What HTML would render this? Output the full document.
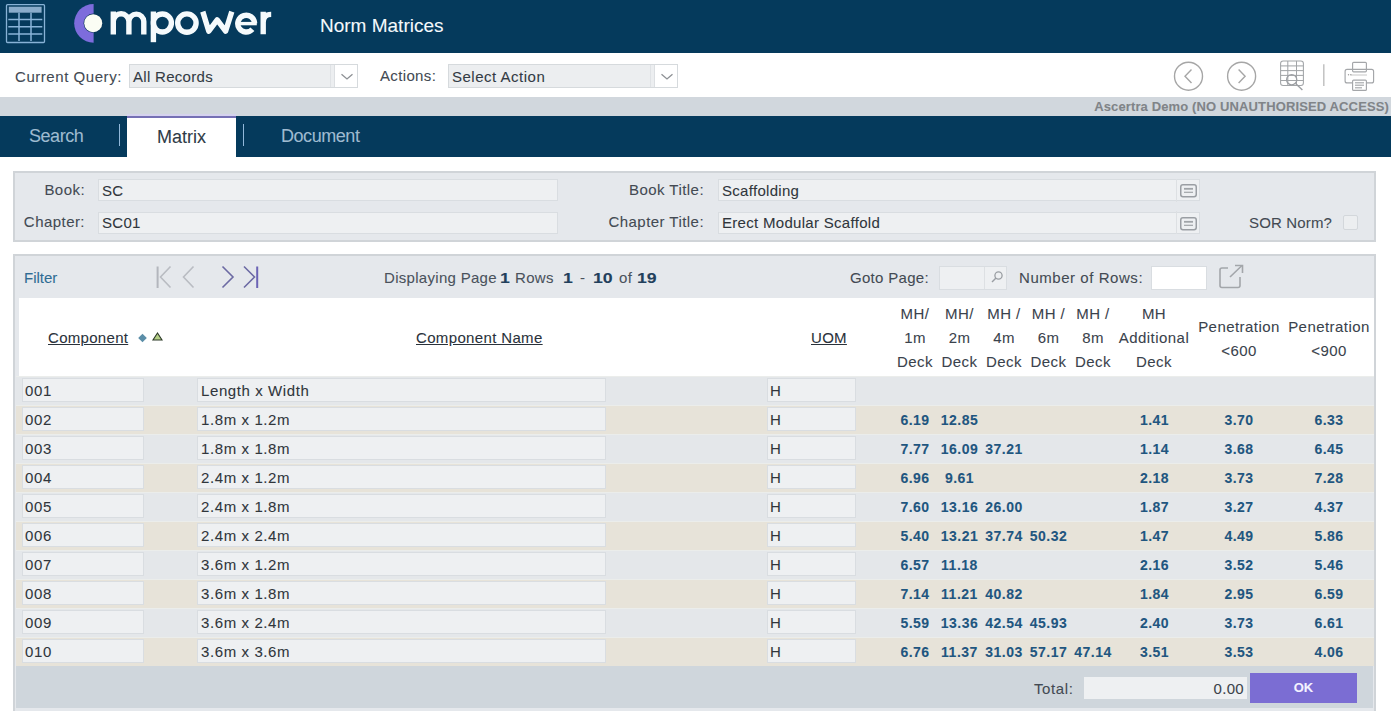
<!DOCTYPE html>
<html><head><meta charset="utf-8">
<style>
*{box-sizing:border-box;margin:0;padding:0}
html,body{width:1391px;height:711px;overflow:hidden;background:#fff;font-family:"Liberation Sans",sans-serif;color:#3c4550;-webkit-text-stroke:0.08px currentColor}
.a{position:absolute}
.t{position:absolute;white-space:nowrap;line-height:1}
.sel{position:absolute;height:24px;background:#eceef0;border:1px solid #d6dadd}
.sel .dd{position:absolute;right:0;top:0;width:23px;height:22px;background:#fff;border-left:1px solid #dcdfe2}
.panel{position:absolute;background:#e5e8ec;border:2px solid #d0d4d8}
.inp{position:absolute;background:#eef0f2;border:1px solid #d9dde1}
.lbl{font-size:15px;color:#434a53}
.row{position:absolute;left:16px;width:1358px;height:29px;border-top:1px solid #ebedeb}
.g{background:#e4e7ea}
.b{background:#e7e3d9}
.num{position:absolute;font-weight:bold;font-size:14px;color:#1f5680;letter-spacing:0.5px;line-height:1;white-space:nowrap;text-align:center;width:60px}
.hd{position:absolute;font-size:15px;color:#3a424c;text-align:center;line-height:24px;white-space:nowrap;letter-spacing:0.45px}
.ctext{position:absolute;font-size:15px;color:#30363c;line-height:1;white-space:nowrap;letter-spacing:0.3px}
.rt{letter-spacing:0.6px}
</style></head><body>
<div class="a" style="left:0;top:0;width:1391px;height:53px;background:#053a5c"></div>
<svg class="a" style="left:0;top:0" width="60" height="53" viewBox="0 0 60 53">
<rect x="6.5" y="4.7" width="38" height="37.8" rx="1" fill="none" stroke="#88b2d6" stroke-width="1.3"/>
<rect x="8.8" y="6.7" width="32.8" height="6" fill="#8aaccb"/>
<g stroke="#8ab4d8" stroke-width="1.5" fill="none">
<line x1="8.3" y1="19.4" x2="42.3" y2="19.4"/><line x1="8.3" y1="26.7" x2="42.3" y2="26.7"/><line x1="8.3" y1="34.1" x2="42.3" y2="34.1"/>
<line x1="19" y1="12.7" x2="19" y2="41"/><line x1="31" y1="12.7" x2="31" y2="41"/>
</g></svg>
<svg class="a" style="left:0;top:0" width="300" height="53" viewBox="0 0 300 53">
<path d="M93.6 3.9 A19.4 19.4 0 0 0 93.6 42.7 Z" fill="#7d6cdc"/>
<circle cx="93.2" cy="23.2" r="9.6" fill="#0b3558"/>
<circle cx="93.2" cy="23.2" r="9" fill="#fbfdf4"/>
<g fill="none" stroke="#f5fafc" stroke-width="5.4" stroke-linecap="butt">
<path d="M113.3 34.5 V11.5 M113.3 21.6 A7.8 7.8 0 0 1 128.9 21.6 V34.5 M128.9 21.6 A7.45 7.45 0 0 1 143.8 21.6 V34.5"/>
<path d="M153.4 42.2 V11.5"/>
<circle cx="162.4" cy="23" r="9"/>
<circle cx="186.9" cy="23.1" r="9.2"/>
<path d="M202.8 11.6 L208.8 31.2 L217.2 19.8 L225.6 31.2 L231.8 11.6" stroke-linejoin="round"/>
<path d="M254.6 23.4 A8.4 8.4 0 1 0 252.4 29.3"/><line x1="238.5" y1="23.6" x2="256.8" y2="23.6" stroke-width="3.4"/>
<path d="M263.2 34.3 V11.7 M263.2 22.5 Q263.2 14.4 271.2 14.4"/>
</g>
</svg>
<div class="t" style="left:320px;top:16px;font-size:19px;color:#f4f9fc;letter-spacing:0">Norm Matrices</div>
<div class="t lbl" style="left:15px;top:69px;letter-spacing:0.55px">Current Query:</div>
<div class="sel" style="left:129px;top:64px;width:229px"><div class="dd"></div></div>
<div class="a" style="left:330px;top:65px;width:1px;height:22px;background:#dfe2e5"></div>
<div class="t" style="left:133px;top:69px;font-size:15px;color:#333b44;letter-spacing:0.3px">All Records</div>
<div class="t lbl" style="left:380px;top:68px;letter-spacing:0.35px">Actions:</div>
<div class="sel" style="left:448px;top:64px;width:230px"><div class="dd"></div></div>
<div class="a" style="left:650px;top:65px;width:1px;height:22px;background:#dfe2e5"></div>
<div class="t" style="left:452px;top:69px;font-size:15px;color:#333b44;letter-spacing:0.5px">Select Action</div>
<svg class="a" style="left:1160px;top:55px" width="231" height="42" viewBox="1160 55 231 42">
<g fill="none" stroke="#a6a6a6" stroke-width="1.4">
<circle cx="1188.5" cy="76.2" r="14"/><polyline points="1191.5,69.5 1185,76.2 1191.5,83"/>
<circle cx="1241.6" cy="76.2" r="14"/><polyline points="1238.6,69.5 1245.1,76.2 1238.6,83"/>
</g>
<g fill="none" stroke="#a2a5a8" stroke-width="1.05">
<rect x="1280.6" y="60.9" width="22.8" height="24.6" rx="2.5"/>
<line x1="1280.6" y1="65.9" x2="1303.4" y2="65.9"/><line x1="1280.6" y1="70.6" x2="1303.4" y2="70.6"/><line x1="1280.6" y1="75.4" x2="1303.4" y2="75.4"/><line x1="1280.6" y1="80.5" x2="1303.4" y2="80.5"/>
<line x1="1287.8" y1="60.9" x2="1287.8" y2="85.5"/><line x1="1296.5" y1="60.9" x2="1296.5" y2="85.5"/>
</g>
<circle cx="1291.7" cy="79.7" r="5.1" fill="none" stroke="#9c9fa3" stroke-width="1.3"/>
<line x1="1295.6" y1="83.6" x2="1302.4" y2="90" stroke="#9c9fa3" stroke-width="1.4"/>
<line x1="1323.8" y1="64.3" x2="1323.8" y2="86" stroke="#c2c2c2" stroke-width="1.5"/>
<g fill="none" stroke="#a4a6a9" stroke-width="1.15">
<rect x="1352.6" y="62.3" width="13.8" height="9.5" rx="1"/>
<rect x="1345.1" y="69.4" width="28.5" height="13.5" rx="2"/>
<rect x="1352.6" y="80.1" width="13.8" height="10.3" rx="1" fill="#fff"/>
<line x1="1355" y1="82.8" x2="1364" y2="82.8"/><line x1="1355" y1="85.2" x2="1364" y2="85.2"/><line x1="1355" y1="87.8" x2="1362" y2="87.8"/>
<line x1="1351" y1="75" x2="1367" y2="75" stroke="#c8c8c8" stroke-width="1"/>
</g>
<circle cx="1348.5" cy="74.8" r="0.7" fill="#9a9a9a"/><circle cx="1350.8" cy="74.8" r="0.7" fill="#9a9a9a"/>
</svg>
<svg class="a" style="left:339.6px;top:70px" width="14" height="12"><polyline points="1.5,4.2 7,9 12.5,4.2" fill="none" stroke="#8e9195" stroke-width="1.3"/></svg>
<svg class="a" style="left:659.6px;top:70px" width="14" height="12"><polyline points="1.5,4.2 7,9 12.5,4.2" fill="none" stroke="#8e9195" stroke-width="1.3"/></svg>
<div class="a" style="left:0;top:97px;width:1391px;height:19px;background:#d1d7dd"></div>
<div class="t" style="right:2px;top:100px;font-size:13px;font-weight:bold;color:#808488;letter-spacing:0.13px">Ascertra Demo (NO UNAUTHORISED ACCESS)</div>
<div class="a" style="left:0;top:116px;width:1391px;height:41px;background:#053a5c"></div>
<div class="a" style="left:127px;top:116px;width:109px;height:41px;background:#fff;border-top:2px solid #7570b4"></div>
<div class="a" style="left:127px;top:114px;width:109px;height:2px;background:#d5d2ee"></div>
<div class="a" style="left:119px;top:124px;width:1px;height:22px;background:#92b8da"></div>
<div class="a" style="left:243px;top:124px;width:1px;height:22px;background:#92b8da"></div>
<div class="t" style="left:29px;top:127px;font-size:18px;letter-spacing:-0.45px;color:#9fbad0">Search</div>
<div class="t" style="left:157px;top:128px;font-size:18px;color:#2f3b47">Matrix</div>
<div class="t" style="left:281px;top:127px;font-size:18px;letter-spacing:-0.45px;color:#9fbad0">Document</div>
<div class="panel" style="left:13px;top:171px;width:1363px;height:71px"></div>
<div class="t lbl" style="right:1306px;top:182px;letter-spacing:0.45px">Book:</div>
<div class="t lbl" style="right:1306px;top:214px;letter-spacing:0.45px">Chapter:</div>
<div class="inp" style="left:98px;top:179px;width:460px;height:22px"></div>
<div class="inp" style="left:98px;top:212px;width:460px;height:22px"></div>
<div class="ctext" style="left:102px;top:183px">SC</div>
<div class="ctext" style="left:102px;top:215px">SC01</div>
<div class="t lbl" style="right:687px;top:182px;letter-spacing:0.45px">Book Title:</div>
<div class="t lbl" style="right:687px;top:214px;letter-spacing:0.45px">Chapter Title:</div>
<div class="inp" style="left:718px;top:179px;width:482px;height:22px"></div>
<div class="inp" style="left:718px;top:212px;width:482px;height:22px"></div>
<div class="ctext" style="left:722px;top:183px">Scaffolding</div>
<div class="ctext" style="left:722px;top:215px">Erect Modular Scaffold</div>
<div class="a" style="left:1176px;top:179px;width:1px;height:23px;background:#dde0e3"></div>
<svg class="a" style="left:1180px;top:184px" width="17" height="14"><rect x="0.75" y="0.75" width="15.5" height="12" rx="2.2" fill="none" stroke="#9a9ea3" stroke-width="1.5"/><line x1="4" y1="4.8" x2="13" y2="4.8" stroke="#a0a4a8" stroke-width="1.8"/><line x1="4" y1="8.3" x2="13" y2="8.3" stroke="#a0a4a8" stroke-width="1.2"/></svg>
<div class="a" style="left:1176px;top:211px;width:1px;height:23px;background:#dde0e3"></div>
<svg class="a" style="left:1180px;top:217px" width="17" height="14"><rect x="0.75" y="0.75" width="15.5" height="12" rx="2.2" fill="none" stroke="#9a9ea3" stroke-width="1.5"/><line x1="4" y1="4.8" x2="13" y2="4.8" stroke="#a0a4a8" stroke-width="1.8"/><line x1="4" y1="8.3" x2="13" y2="8.3" stroke="#a0a4a8" stroke-width="1.2"/></svg>
<div class="t lbl" style="left:1249px;top:215px;letter-spacing:0.15px">SOR Norm?</div>
<div class="a" style="left:1343px;top:215px;width:15px;height:15px;background:#eceef0;border:1px solid #d3d7db;border-radius:2px"></div>
<div class="panel" style="left:13px;top:254px;width:1363px;height:470px"></div>
<div class="t" style="left:24px;top:270px;font-size:15px;color:#2f6c94">Filter</div>
<svg class="a" style="left:150px;top:262px" width="115" height="30" viewBox="150 262 115 30">
<g fill="none" stroke-width="1.6">
<line x1="157.6" y1="266.5" x2="157.6" y2="288" stroke="#b3b6bd" stroke-width="2"/>
<polyline points="170.5,266.5 160.5,277 170.5,287.5" stroke="#b9bcc2"/>
<polyline points="193.5,266.5 183.5,277 193.5,287.5" stroke="#b9bcc2"/>
<polyline points="222.5,266.5 233,277 222.5,287.5" stroke="#6c6aa3"/>
<polyline points="244,266.5 254.5,277 244,287.5" stroke="#6c6aa3"/>
<line x1="257.2" y1="266.5" x2="257.2" y2="288" stroke="#6b63b5" stroke-width="2"/>
</g></svg>
<div class="t" style="left:384px;top:270px;font-size:15px;color:#4a525c;letter-spacing:0.3px">Displaying Page</div>
<div class="t" style="left:515px;top:270px;font-size:15px;color:#4a525c;letter-spacing:0.3px">Rows</div>
<div class="t" style="left:619px;top:270px;font-size:15px;color:#4a525c;letter-spacing:0.3px">of</div>
<div class="t" style="left:580px;top:270px;font-size:15px;color:#4a525c">-</div>
<div class="t" style="left:500px;top:270px;width:9px;font-size:15px;font-weight:bold;color:#22405c;transform:scaleX(1.18);transform-origin:left">1</div>
<div class="t" style="left:563px;top:270px;width:9px;font-size:15px;font-weight:bold;color:#22405c;transform:scaleX(1.18);transform-origin:left">1</div>
<div class="t" style="left:593px;top:270px;width:21px;font-size:15px;font-weight:bold;color:#22405c;transform:scaleX(1.18);transform-origin:left">10</div>
<div class="t" style="left:637px;top:270px;width:20px;font-size:15px;font-weight:bold;color:#22405c;transform:scaleX(1.18);transform-origin:left">19</div>
<div class="t lbl" style="left:850px;top:270px;letter-spacing:0.3px">Goto Page:</div>
<div class="a" style="left:939px;top:266px;width:68px;height:24px;background:#eef0f2;border:1px solid #d9dde1"></div>
<div class="a" style="left:984px;top:267px;width:1px;height:22px;background:#dde0e3"></div>
<svg class="a" style="left:988px;top:268px" width="18" height="18"><circle cx="10.5" cy="7.5" r="3.6" fill="none" stroke="#9a9ea3" stroke-width="1.3"/><line x1="8" y1="10" x2="4" y2="14" stroke="#9a9ea3" stroke-width="1.4"/></svg>
<div class="t lbl" style="left:1019px;top:270px;letter-spacing:0.55px">Number of Rows:</div>
<div class="a" style="left:1151px;top:266px;width:56px;height:24px;background:#fff;border:1px solid #d9dde1"></div>
<svg class="a" style="left:1215px;top:262px" width="32" height="30"><g fill="none" stroke="#a3a6aa" stroke-width="1.6"><path d="M13 6 H7 Q5 6 5 8 V23.5 Q5 25.5 7 25.5 H23 Q25 25.5 25 23.5 V15"/><line x1="15" y1="15" x2="27" y2="3.5"/><polyline points="20,3.5 27.5,3.5 27.5,11"/></g></svg>
<div class="a" style="left:19px;top:298px;width:1355px;height:78px;background:#fff"></div>
<div class="t" style="left:48px;top:330px;font-size:15px;color:#2a323b;text-decoration:underline;letter-spacing:0.3px">Component</div>
<svg class="a" style="left:136px;top:330px" width="30" height="16"><path d="M6.5 3.7 L10.8 8 L6.5 12.3 L2.2 8Z" fill="#5b8ea8"/><path d="M21.5 3 L26 10 L17 10Z" fill="#b5cf86" stroke="#2d3a28" stroke-width="1.1"/></svg>
<div class="t" style="left:416px;top:330px;font-size:15px;color:#2a323b;text-decoration:underline;letter-spacing:0.35px">Component Name</div>
<div class="t" style="left:811px;top:330px;font-size:15px;color:#2a323b;text-decoration:underline;letter-spacing:0.3px">UOM</div>
<div class="hd" style="left:885px;top:302px;width:60px">MH/<br>1m<br>Deck</div>
<div class="hd" style="left:929.5px;top:302px;width:60px">MH/<br>2m<br>Deck</div>
<div class="hd" style="left:974px;top:302px;width:60px">MH /<br>4m<br>Deck</div>
<div class="hd" style="left:1018.5px;top:302px;width:60px">MH /<br>6m<br>Deck</div>
<div class="hd" style="left:1063px;top:302px;width:60px">MH /<br>8m<br>Deck</div>
<div class="hd" style="left:1104px;top:302px;width:100px">MH<br>Additional<br>Deck</div>
<div class="hd" style="left:1189px;top:315px;width:100px">Penetration<br>&lt;600</div>
<div class="hd" style="left:1279px;top:315px;width:100px">Penetration<br>&lt;900</div>
<div class="row g" style="top:376px"></div>
<div class="inp" style="left:22px;top:378px;width:122px;height:24px"></div>
<div class="inp" style="left:197px;top:378px;width:409px;height:24px"></div>
<div class="inp" style="left:767px;top:378px;width:89px;height:24px"></div>
<div class="ctext rt" style="left:25px;top:383px">001</div>
<div class="ctext rt" style="left:201px;top:383px">Length x Width</div>
<div class="ctext" style="left:770px;top:383px">H</div>
<div class="row b" style="top:405px"></div>
<div class="inp" style="left:22px;top:407px;width:122px;height:24px"></div>
<div class="inp" style="left:197px;top:407px;width:409px;height:24px"></div>
<div class="inp" style="left:767px;top:407px;width:89px;height:24px"></div>
<div class="ctext rt" style="left:25px;top:412px">002</div>
<div class="ctext rt" style="left:201px;top:412px">1.8m x 1.2m</div>
<div class="ctext" style="left:770px;top:412px">H</div>
<div class="num" style="left:885px;top:413px">6.19</div>
<div class="num" style="left:929.5px;top:413px">12.85</div>
<div class="num" style="left:1124.5px;top:413px">1.41</div>
<div class="num" style="left:1209px;top:413px">3.70</div>
<div class="num" style="left:1299px;top:413px">6.33</div>
<div class="row g" style="top:434px"></div>
<div class="inp" style="left:22px;top:436px;width:122px;height:24px"></div>
<div class="inp" style="left:197px;top:436px;width:409px;height:24px"></div>
<div class="inp" style="left:767px;top:436px;width:89px;height:24px"></div>
<div class="ctext rt" style="left:25px;top:441px">003</div>
<div class="ctext rt" style="left:201px;top:441px">1.8m x 1.8m</div>
<div class="ctext" style="left:770px;top:441px">H</div>
<div class="num" style="left:885px;top:442px">7.77</div>
<div class="num" style="left:929.5px;top:442px">16.09</div>
<div class="num" style="left:974px;top:442px">37.21</div>
<div class="num" style="left:1124.5px;top:442px">1.14</div>
<div class="num" style="left:1209px;top:442px">3.68</div>
<div class="num" style="left:1299px;top:442px">6.45</div>
<div class="row b" style="top:463px"></div>
<div class="inp" style="left:22px;top:465px;width:122px;height:24px"></div>
<div class="inp" style="left:197px;top:465px;width:409px;height:24px"></div>
<div class="inp" style="left:767px;top:465px;width:89px;height:24px"></div>
<div class="ctext rt" style="left:25px;top:470px">004</div>
<div class="ctext rt" style="left:201px;top:470px">2.4m x 1.2m</div>
<div class="ctext" style="left:770px;top:470px">H</div>
<div class="num" style="left:885px;top:471px">6.96</div>
<div class="num" style="left:929.5px;top:471px">9.61</div>
<div class="num" style="left:1124.5px;top:471px">2.18</div>
<div class="num" style="left:1209px;top:471px">3.73</div>
<div class="num" style="left:1299px;top:471px">7.28</div>
<div class="row g" style="top:492px"></div>
<div class="inp" style="left:22px;top:494px;width:122px;height:24px"></div>
<div class="inp" style="left:197px;top:494px;width:409px;height:24px"></div>
<div class="inp" style="left:767px;top:494px;width:89px;height:24px"></div>
<div class="ctext rt" style="left:25px;top:499px">005</div>
<div class="ctext rt" style="left:201px;top:499px">2.4m x 1.8m</div>
<div class="ctext" style="left:770px;top:499px">H</div>
<div class="num" style="left:885px;top:500px">7.60</div>
<div class="num" style="left:929.5px;top:500px">13.16</div>
<div class="num" style="left:974px;top:500px">26.00</div>
<div class="num" style="left:1124.5px;top:500px">1.87</div>
<div class="num" style="left:1209px;top:500px">3.27</div>
<div class="num" style="left:1299px;top:500px">4.37</div>
<div class="row b" style="top:521px"></div>
<div class="inp" style="left:22px;top:523px;width:122px;height:24px"></div>
<div class="inp" style="left:197px;top:523px;width:409px;height:24px"></div>
<div class="inp" style="left:767px;top:523px;width:89px;height:24px"></div>
<div class="ctext rt" style="left:25px;top:528px">006</div>
<div class="ctext rt" style="left:201px;top:528px">2.4m x 2.4m</div>
<div class="ctext" style="left:770px;top:528px">H</div>
<div class="num" style="left:885px;top:529px">5.40</div>
<div class="num" style="left:929.5px;top:529px">13.21</div>
<div class="num" style="left:974px;top:529px">37.74</div>
<div class="num" style="left:1018.5px;top:529px">50.32</div>
<div class="num" style="left:1124.5px;top:529px">1.47</div>
<div class="num" style="left:1209px;top:529px">4.49</div>
<div class="num" style="left:1299px;top:529px">5.86</div>
<div class="row g" style="top:550px"></div>
<div class="inp" style="left:22px;top:552px;width:122px;height:24px"></div>
<div class="inp" style="left:197px;top:552px;width:409px;height:24px"></div>
<div class="inp" style="left:767px;top:552px;width:89px;height:24px"></div>
<div class="ctext rt" style="left:25px;top:557px">007</div>
<div class="ctext rt" style="left:201px;top:557px">3.6m x 1.2m</div>
<div class="ctext" style="left:770px;top:557px">H</div>
<div class="num" style="left:885px;top:558px">6.57</div>
<div class="num" style="left:929.5px;top:558px">11.18</div>
<div class="num" style="left:1124.5px;top:558px">2.16</div>
<div class="num" style="left:1209px;top:558px">3.52</div>
<div class="num" style="left:1299px;top:558px">5.46</div>
<div class="row b" style="top:579px"></div>
<div class="inp" style="left:22px;top:581px;width:122px;height:24px"></div>
<div class="inp" style="left:197px;top:581px;width:409px;height:24px"></div>
<div class="inp" style="left:767px;top:581px;width:89px;height:24px"></div>
<div class="ctext rt" style="left:25px;top:586px">008</div>
<div class="ctext rt" style="left:201px;top:586px">3.6m x 1.8m</div>
<div class="ctext" style="left:770px;top:586px">H</div>
<div class="num" style="left:885px;top:587px">7.14</div>
<div class="num" style="left:929.5px;top:587px">11.21</div>
<div class="num" style="left:974px;top:587px">40.82</div>
<div class="num" style="left:1124.5px;top:587px">1.84</div>
<div class="num" style="left:1209px;top:587px">2.95</div>
<div class="num" style="left:1299px;top:587px">6.59</div>
<div class="row g" style="top:608px"></div>
<div class="inp" style="left:22px;top:610px;width:122px;height:24px"></div>
<div class="inp" style="left:197px;top:610px;width:409px;height:24px"></div>
<div class="inp" style="left:767px;top:610px;width:89px;height:24px"></div>
<div class="ctext rt" style="left:25px;top:615px">009</div>
<div class="ctext rt" style="left:201px;top:615px">3.6m x 2.4m</div>
<div class="ctext" style="left:770px;top:615px">H</div>
<div class="num" style="left:885px;top:616px">5.59</div>
<div class="num" style="left:929.5px;top:616px">13.36</div>
<div class="num" style="left:974px;top:616px">42.54</div>
<div class="num" style="left:1018.5px;top:616px">45.93</div>
<div class="num" style="left:1124.5px;top:616px">2.40</div>
<div class="num" style="left:1209px;top:616px">3.73</div>
<div class="num" style="left:1299px;top:616px">6.61</div>
<div class="row b" style="top:637px"></div>
<div class="inp" style="left:22px;top:639px;width:122px;height:24px"></div>
<div class="inp" style="left:197px;top:639px;width:409px;height:24px"></div>
<div class="inp" style="left:767px;top:639px;width:89px;height:24px"></div>
<div class="ctext rt" style="left:25px;top:644px">010</div>
<div class="ctext rt" style="left:201px;top:644px">3.6m x 3.6m</div>
<div class="ctext" style="left:770px;top:644px">H</div>
<div class="num" style="left:885px;top:645px">6.76</div>
<div class="num" style="left:929.5px;top:645px">11.37</div>
<div class="num" style="left:974px;top:645px">31.03</div>
<div class="num" style="left:1018.5px;top:645px">57.17</div>
<div class="num" style="left:1063px;top:645px">47.14</div>
<div class="num" style="left:1124.5px;top:645px">3.51</div>
<div class="num" style="left:1209px;top:645px">3.53</div>
<div class="num" style="left:1299px;top:645px">4.06</div>
<div class="a" style="left:16px;top:666px;width:1357px;height:42px;background:#cfd6dc"></div>
<div class="t lbl" style="left:1034px;top:681px;letter-spacing:0.6px">Total:</div>
<div class="a" style="left:1084px;top:677px;width:163px;height:22px;background:#eef0f2"></div>
<div class="t" style="right:147px;top:681px;font-size:15px;color:#3c434b;letter-spacing:0.3px">0.00</div>
<div class="a" style="left:1250px;top:673px;width:107px;height:30px;background:#7b6dd3"></div>
<div class="t" style="left:1250px;top:681px;width:107px;text-align:center;font-size:13px;font-weight:bold;color:#f4f2ff">OK</div>
</body></html>
